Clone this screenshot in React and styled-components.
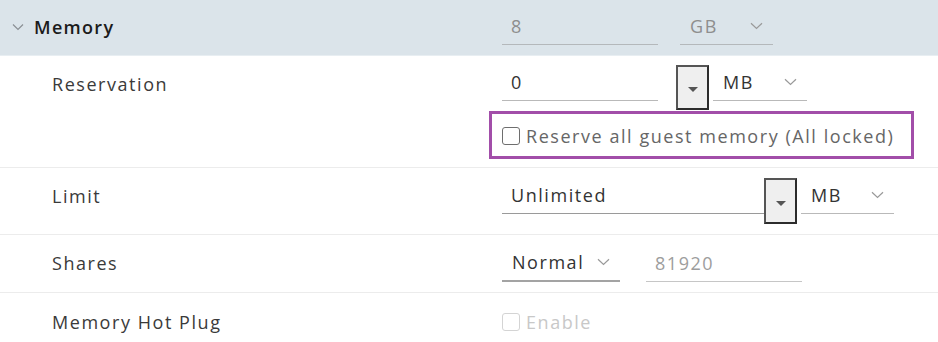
import React from 'react'
import styled, { createGlobalStyle } from 'styled-components'

const GlobalStyle = createGlobalStyle`
  html, body {
    margin: 0;
    padding: 0;
    background: #fff;
  }
  body {
    font-family: "Open Sans", "Noto Sans", sans-serif;
    color: #333;
  }
`

const Panel = styled.div`
  width: 938px;
  height: 342px;
  overflow: hidden;
  font-size: 18px;
  letter-spacing: 1.55px;
`

const Row = styled.div`
  display: grid;
  grid-template-columns: 502px 1fr;
  height: ${(p) => p.h}px;
  background: ${(p) => (p.head ? '#dbe4ea' : '#fff')};
  border-bottom: 1px solid ${(p) => (p.head ? '#e8eef2' : '#ececec')};
  box-sizing: border-box;
`

const Label = styled.div`
  display: flex;
  align-items: flex-start;
  gap: 10px;
  padding-left: ${(p) => (p.head ? 12 : 52)}px;
  padding-top: ${(p) => p.top}px;
  font-weight: ${(p) => (p.head ? 600 : 400)};
  letter-spacing: ${(p) => (p.head ? 1.3 : 1.55)}px;
  color: ${(p) => (p.head ? '#1b1b1b' : '#3a3a3a')};
  line-height: 22px;
`

const Value = styled.div`
  display: flex;
  flex-direction: column;
  padding-top: ${(p) => p.top}px;
`

const Controls = styled.div`
  display: flex;
  align-items: flex-end;
  gap: ${(p) => p.gap || 0}px;
`

const Field = styled.div`
  width: ${(p) => p.w}px;
  height: ${(p) => p.h || 36}px;
  box-sizing: border-box;
  border-bottom: ${(p) => p.line || 1}px solid ${(p) => p.lineColor || '#b9b9b9'};
  display: flex;
  align-items: flex-end;
  justify-content: space-between;
  padding: 0 10px 7px ${(p) => p.pl || 9}px;
  line-height: 22px;
  color: ${(p) => p.color || '#333'};
  svg {
    margin-bottom: 7px;
  }
`

const Chevron = ({ color = '#9a9a9a' }) => (
  <svg width="13" height="8" viewBox="0 0 13 8">
    <path d="M1 1.2 L6.5 6.5 L12 1.2" fill="none" stroke={color} strokeWidth="1.2" />
  </svg>
)

const DropButton = styled.div`
  width: ${(p) => p.w}px;
  height: ${(p) => p.h}px;
  box-sizing: border-box;
  border: 2px solid #2c2c2c;
  border-left-color: #555;
  border-top-color: #555;
  background: #efefef;
  display: flex;
  align-items: center;
  justify-content: center;
  margin: 0 4px ${(p) => p.mb || 0}px ${(p) => p.ml || 0}px;
  &::after {
    content: '';
    width: 0;
    height: 0;
    margin-top: 4px;
    border-left: 5px solid transparent;
    border-right: 5px solid transparent;
    border-top: 5px solid #555;
  }
`

const Highlight = styled.div`
  margin: 10px 0 0 -13px;
  width: 425px;
  height: 48px;
  box-sizing: border-box;
  border: 3px solid #a24ea9;
  display: flex;
  align-items: center;
  padding: 2px 0 0 10px;
  gap: 6px;
`

const Box = styled.span`
  width: 18px;
  height: 18px;
  box-sizing: border-box;
  border: 1.5px solid ${(p) => (p.disabled ? '#d4d4d4' : '#6e6e6e')};
  border-radius: 3px;
  background: #fff;
  flex: none;
`

const CheckText = styled.span`
  color: ${(p) => (p.disabled ? '#c8c8c8' : '#666')};
  line-height: 22px;
`

const CheckLine = styled.div`
  display: flex;
  align-items: center;
  gap: 6px;
`

export default function App() {
  return (
    <Panel>
      <GlobalStyle />
      <Row head h={56}>
        <Label head top={16}>
          <svg width="12" height="22" viewBox="0 0 12 22">
            <path d="M1 8.5 L6 13.5 L11 8.5" fill="none" stroke="#8a8f94" strokeWidth="1.2" />
          </svg>
          Memory
        </Label>
        <Value top={9}>
          <Controls gap={22}>
            <Field w={156} color="#8e8e8e" lineColor="#b4b8bb">8</Field>
            <Field w={93} color="#8e8e8e" lineColor="#b4b8bb" pl={10}>
              GB <Chevron />
            </Field>
          </Controls>
        </Value>
      </Row>
      <Row h={112}>
        <Label top={17}>Reservation</Label>
        <Value top={9}>
          <Controls>
            <Field w={156}>0</Field>
            <DropButton w={33} h={45} mb={-9} ml={18} />
            <Field w={94} pl={10}>
              MB <Chevron />
            </Field>
          </Controls>
          <Highlight>
            <Box />
            <CheckText>Reserve all guest memory (All locked)</CheckText>
          </Highlight>
        </Value>
      </Row>
      <Row h={67}>
        <Label top={17}>Limit</Label>
        <Value top>
          <Controls>
            <Field w={262} h={46} lineColor="#9a9a9a">Unlimited</Field>
            <DropButton w={33} h={46} mb={-10} />
            <Field w={93} h={46} pl={10}>
              MB <Chevron />
            </Field>
          </Controls>
        </Value>
      </Row>
      <Row h={58}>
        <Label top={17}>Shares</Label>
        <Value top={11}>
          <Controls gap={26}>
            <Field w={118} line={2} lineColor="#a3a3a3" pl={10}>
              Normal <Chevron />
            </Field>
            <Field w={156} color="#9d9d9d" lineColor="#c6c6c6">81920</Field>
          </Controls>
        </Value>
      </Row>
      <Row h={50}>
        <Label top={18}>Memory Hot Plug</Label>
        <Value top={18}>
          <CheckLine>
            <Box disabled />
            <CheckText disabled>Enable</CheckText>
          </CheckLine>
        </Value>
      </Row>
    </Panel>
  )
}
